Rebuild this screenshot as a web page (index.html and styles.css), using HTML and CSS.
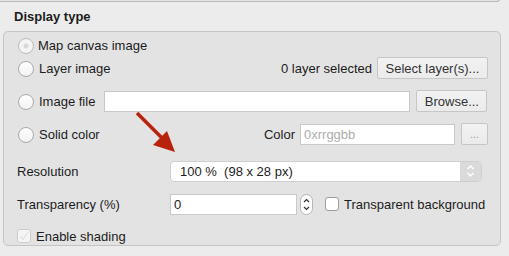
FILE: index.html
```html
<!DOCTYPE html>
<html lang="en">
  <head>
    <meta charset="utf-8">
    <title>Display type</title>
    <link rel="stylesheet" href="styles.css">
  </head>
  <body>
    <div class="prev-box"></div>
    <div class="title">Display type</div>
    <div class="group">
      <div class="row r-first">
        <span class="radio r-on"></span><span class="lbl">Map canvas image</span>
      </div>
      <div class="row r-tight">
        <span class="radio"></span><span class="lbl">Layer image</span>
        <span class="grow"></span>
        <span class="note">0 layer selected</span>
        <button class="btn w-select">Select layer(s)...</button>
      </div>
      <div class="row">
        <span class="radio"></span><span class="lbl">Image file</span>
        <input class="field w-file" type="text">
        <button class="btn w-browse">Browse...</button>
      </div>
      <div class="row">
        <span class="radio"></span><span class="lbl">Solid color</span>
        <span class="grow"></span>
        <span class="note">Color</span>
        <input class="field w-color" type="text" placeholder="0xrrggbb">
        <button class="btn w-dots">...</button>
      </div>
      <div class="row r-wide">
        <span class="key">Resolution</span>
        <div class="combo">
          <span class="combo-text">100 %&nbsp; (98 x 28 px)</span>
          <span class="combo-arrows">
            <svg width="9" height="14" viewBox="0 0 9 14"><path d="M1.5 5 L4.5 2 L7.5 5 M1.5 9 L4.5 12 L7.5 9" fill="none" stroke="#fff" stroke-width="1.4"/></svg>
          </span>
        </div>
      </div>
      <div class="row">
        <span class="key">Transparency (%)</span>
        <input class="field w-spin" type="text" value="0">
        <span class="spin">
          <svg width="9" height="17" viewBox="0 0 9 17"><path d="M2 6 L4.5 3.5 L7 6 M2 11 L4.5 13.5 L7 11" fill="none" stroke="#333" stroke-width="1.2"/></svg>
        </span>
        <span class="check"></span>
        <span class="lbl-check">Transparent background</span>
      </div>
      <div class="row r-last">
        <span class="check c-off">
          <svg width="12" height="12" viewBox="0 0 12 12"><path d="M2.5 6.5 L5 9.5 L10 2" fill="none" stroke="#e0e0e0" stroke-width="1.2"/></svg>
        </span>
        <span class="lbl-check">Enable shading</span>
      </div>
    </div>
    <svg class="arrow" width="60" height="60" viewBox="0 0 60 60">
      <line x1="2" y1="3" x2="29" y2="30" stroke="#b8230c" stroke-width="3.6"/>
      <polygon points="40,42 18,35 32,21" fill="#b8230c"/>
    </svg>
  </body>
</html>
```

FILE: styles.css
```css
html { box-sizing : border-box }
*, *:before, *:after { box-sizing : inherit }

:root {
  --c-bg : #ececec;
  --c-box : #e3e3e3;
  --c-line : #c4c4c4;
  --c-fg : #1c1c1c;
  --f-ui : "Liberation Sans", Arial, sans-serif;
}

body {
  margin : 0;
  width : 509px;
  height : 256px;
  overflow : hidden;
  position : relative;
  background-color : var(--c-bg);
  font-family : var(--f-ui);
  font-size : 13px;
  color : var(--c-fg);
  white-space : nowrap;
}

.prev-box {
  height : 3px;
  margin : -1px 9px 0 -6px;
  border : 1px solid #b9b9b9;
  border-top : none;
  border-radius : 0 0 5px 5px;
  background-color : var(--c-box);
}

.title {
  font-weight : bold;
  padding : 7px 0 0 14px;
  height : 29px;
  line-height : 16px;
}

.group {
  margin : 0 8px 0 3px;
  height : 215px;
  padding : 2px 12px 0 13px;
  border : 1px solid var(--c-line);
  border-radius : 5px;
  background-color : var(--c-box);
}

.row {
  display : flex;
  align-items : center;
  height : 22px;
  margin-top : 11px;
}

.r-first { margin-top : 0 }
.r-tight { margin-top : 1px }
.r-wide { margin-top : 15px }
.r-last { margin-top : 11px; height : 20px }

.grow { flex : 1 }

.lbl, .note, .key, .lbl-check { flex : none }

.radio {
  width : 16px;
  height : 16px;
  margin : 1px 5px 0 1px;
  border : 1px solid #a9a9a9;
  border-radius : 50%;
  background : linear-gradient(#ffffff, #f2f2f2);
  flex : none;
}

.radio.r-on {
  margin-right : 4px;
  border-color : #bdbdbd;
  background : radial-gradient(circle, #d8d8d8 0 2px, #f4f4f4 3px);
}

.note { margin-right : 5px }

.lbl-check { margin-left : 5px }

.btn {
  height : 22px;
  padding : 0;
  font-family : var(--f-ui);
  font-size : 13px;
  color : #333;
  border : 1px solid #c6c6c6;
  border-radius : 2px;
  background : linear-gradient(#f2f2f2, #ebebeb);
  flex : none;
}

.w-select { width : 111px }
.w-browse { width : 71px; margin-left : 6px }
.w-dots { width : 27px; margin-left : 6px; color : #999; font-size : 11px }

.field {
  height : 21px;
  padding : 0 3px;
  font-family : var(--f-ui);
  font-size : 13px;
  color : var(--c-fg);
  border : 1px solid #c9c9c9;
  background-color : #fff;
  outline : none;
  flex : none;
}

.field::placeholder { color : #adadad }

.w-file { width : 306px; margin-left : 9px }
.w-color { width : 155px }
.w-spin { width : 127px }

.key { width : 153px }

.combo {
  display : flex;
  width : 312px;
  height : 21px;
  border : 1px solid #cfcfcf;
  border-radius : 4px;
  background-color : #fff;
  overflow : hidden;
}

.combo-text {
  flex : 1;
  padding-left : 9px;
  line-height : 19px;
}

.combo-arrows {
  width : 21px;
  display : flex;
  align-items : center;
  justify-content : center;
  background-color : #dadada;
}

.spin {
  display : flex;
  align-items : center;
  justify-content : center;
  width : 13px;
  height : 21px;
  margin-left : 3px;
  border : 1px solid #b5b5b5;
  border-radius : 7px;
  background-color : #fff;
  flex : none;
}

.check {
  width : 14px;
  height : 14px;
  margin-left : 12px;
  border : 1px solid #9d9d9d;
  border-radius : 3px;
  background-color : #fff;
  flex : none;
}

.check.c-off {
  display : flex;
  align-items : center;
  justify-content : center;
  margin-left : 0;
  border-color : #cdcdcd;
  background-color : #f5f5f5;
}

.arrow {
  position : absolute;
  left : 135px;
  top : 110px;
}
```
